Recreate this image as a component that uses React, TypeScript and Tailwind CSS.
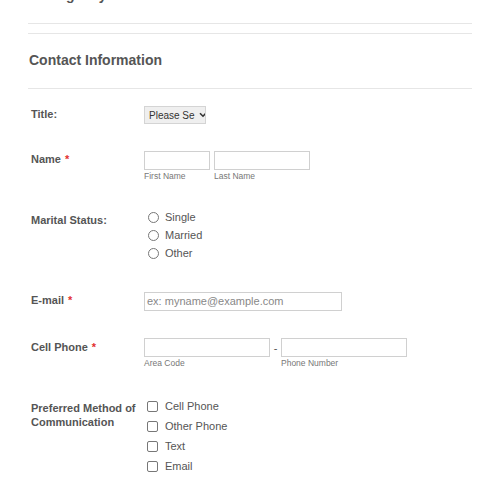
const font = { fontFamily: '"Liberation Sans", Arial, sans-serif' };

function Req() {
  return <span className="ml-1 text-[#e2312f]">*</span>;
}

function Label({ children, className = "" }: { children: React.ReactNode; className?: string }) {
  return (
    <div
      className={`w-[116px] shrink-0 whitespace-nowrap pl-[3px] text-[11px] font-bold leading-[14px] text-[#555] ${className}`}
    >
      {children}
    </div>
  );
}

function Radio({ label }: { label: string }) {
  return (
    <div className="flex h-[18px] items-center">
      <span className="ml-[4px] h-[11px] w-[11px] rounded-full border border-[#777] bg-white" />
      <span className="ml-[6px] text-[11px] text-[#555]">{label}</span>
    </div>
  );
}

function Check({ label }: { label: string }) {
  return (
    <div className="flex h-[20px] items-center">
      <span className="ml-[3px] mt-[1px] h-[11px] w-[11px] rounded-[2px] border border-[#777] bg-white" />
      <span className="ml-[7px] text-[11px] text-[#555]">{label}</span>
    </div>
  );
}

function Field({ w, sub, placeholder }: { w: string; sub?: string; placeholder?: string }) {
  return (
    <div className="flex flex-col">
      <div
        className={`h-[19px] ${w} border border-[#d0d0d0] bg-white px-[2px] text-[11px] leading-[17px] text-[#888]`}
      >
        {placeholder}
      </div>
      {sub && <div className="mt-[1px] whitespace-nowrap text-[8.5px] leading-[11px] text-[#777]">{sub}</div>}
    </div>
  );
}

export default function App() {
  return (
    <div className="h-[484px] w-[500px] overflow-hidden bg-white" style={font}>
      <div className="px-[28px]">
        <div className="-mt-[12px] h-[14px] pl-[3px] text-[14px] font-bold leading-[14px] text-[#555]">
          Emergency Contact Information
        </div>
        <div className="mt-[21px] border-t border-[#e6e6e6]" />
        <div className="mt-[9px] border-t border-[#e6e6e6]" />
        <div className="mt-[17px] pl-[1px] text-[14px] font-bold leading-[18px] text-[#555]">
          Contact Information
        </div>
        <div className="mt-[19px] border-t border-[#e6e6e6]" />

        {/* Title */}
        <div className="mt-[17px] flex">
          <Label className="pt-[1px]">Title:</Label>
          <div className="flex h-[18px] w-[62px] items-center overflow-hidden whitespace-nowrap border border-[#d4d4d4] bg-[#efefef] pl-[4px] text-[10px] text-[#333]">
            <span>Please Se</span>
            <svg className="ml-[4px] shrink-0" width="8" height="6" viewBox="0 0 8 6">
              <path d="M1 1.2 L4 4.2 L7 1.2" fill="none" stroke="#333" strokeWidth="1.6" />
            </svg>
          </div>
        </div>

        {/* Name */}
        <div className="mt-[27px] flex">
          <Label className="pt-[1px]">
            Name
            <Req />
          </Label>
          <div className="flex gap-[4px]">
            <Field w="w-[66px]" sub="First Name" />
            <Field w="w-[96px]" sub="Last Name" />
          </div>
        </div>

        {/* Marital */}
        <div className="mt-[26px] flex">
          <Label className="pt-[5px]">Marital Status:</Label>
          <div className="flex flex-col">
            <Radio label="Single" />
            <Radio label="Married" />
            <Radio label="Other" />
          </div>
        </div>

        {/* Email */}
        <div className="mt-[30px] flex">
          <Label className="pt-[1px]">
            E-mail
            <Req />
          </Label>
          <Field w="w-[198px]" placeholder="ex: myname@example.com" />
        </div>

        {/* Cell */}
        <div className="mt-[27px] flex">
          <Label className="pt-[2px]">
            Cell Phone
            <Req />
          </Label>
          <div className="flex">
            <Field w="w-[126px]" sub="Area Code" />
            <span className="w-[11px] pt-[2px] text-center text-[11px] text-[#555]">-</span>
            <Field w="w-[126px]" sub="Phone Number" />
          </div>
        </div>

        {/* Preferred */}
        <div className="mt-[27px] flex">
          <Label className="pt-[5px] leading-[12px]">
            Preferred Method of
            <br />
            Communication
          </Label>
          <div className="flex flex-col">
            <Check label="Cell Phone" />
            <Check label="Other Phone" />
            <Check label="Text" />
            <Check label="Email" />
          </div>
        </div>
      </div>
    </div>
  );
}
